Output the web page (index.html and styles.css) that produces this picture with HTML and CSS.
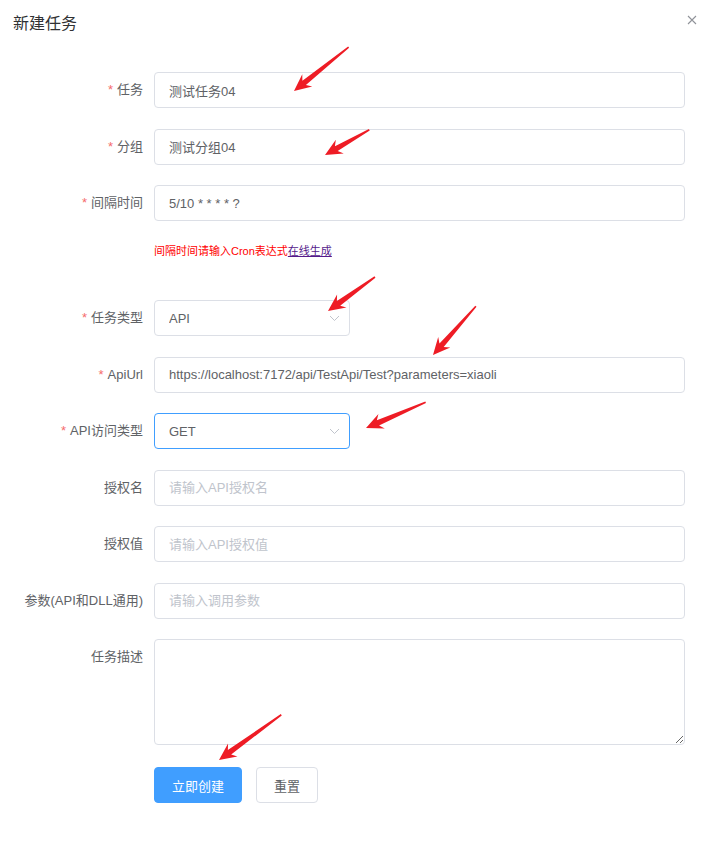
FILE: index.html
```html
<!DOCTYPE html>
<html lang="zh-CN">
<head>
    <meta charset="UTF-8">
    <meta name="viewport" content="width=device-width, initial-scale=1.0">
    <title>新建任务</title>
    <link rel="stylesheet" href="styles.css">
</head>
<body>
    <div class="dialog">
        <div class="dialog-header">
            <span class="dialog-title">新建任务</span>
            <button class="dialog-close" type="button" aria-label="关闭">
                <svg width="10" height="10" viewBox="0 0 10 10"><path d="M1 1L9 9M9 1L1 9" stroke="#909399" stroke-width="1.1" fill="none"/></svg>
            </button>
        </div>

        <form class="task-form">
            <div class="form-item">
                <label class="form-label required">任务</label>
                <div class="form-content"><input class="input" type="text" value="测试任务04"></div>
            </div>
            <div class="form-item">
                <label class="form-label required">分组</label>
                <div class="form-content"><input class="input" type="text" value="测试分组04"></div>
            </div>
            <div class="form-item">
                <label class="form-label required">间隔时间</label>
                <div class="form-content"><input class="input" type="text" value="5/10 * * * * ?"></div>
            </div>
            <div class="form-item hint-item">
                <label class="form-label"></label>
                <div class="form-content hint">间隔时间请输入Cron表达式<a href="#" class="hint-link">在线生成</a></div>
            </div>
            <div class="form-item">
                <label class="form-label required">任务类型</label>
                <div class="form-content">
                    <div class="select">
                        <input class="input" type="text" value="API" readonly>
                        <svg class="select-arrow" width="11" height="7" viewBox="0 0 11 7"><path d="M1 1L5.5 5.5L10 1" stroke="#C0C4CC" stroke-width="1" fill="none"/></svg>
                    </div>
                </div>
            </div>
            <div class="form-item">
                <label class="form-label required">ApiUrl</label>
                <div class="form-content"><input class="input" type="text" value="https://localhost:7172/api/TestApi/Test?parameters=xiaoli"></div>
            </div>
            <div class="form-item">
                <label class="form-label required">API访问类型</label>
                <div class="form-content">
                    <div class="select">
                        <input class="input focused" type="text" value="GET" readonly>
                        <svg class="select-arrow" width="11" height="7" viewBox="0 0 11 7"><path d="M1 1L5.5 5.5L10 1" stroke="#C0C4CC" stroke-width="1" fill="none"/></svg>
                    </div>
                </div>
            </div>
            <div class="form-item">
                <label class="form-label">授权名</label>
                <div class="form-content"><input class="input" type="text" placeholder="请输入API授权名"></div>
            </div>
            <div class="form-item">
                <label class="form-label">授权值</label>
                <div class="form-content"><input class="input" type="text" placeholder="请输入API授权值"></div>
            </div>
            <div class="form-item">
                <label class="form-label">参数(API和DLL通用)</label>
                <div class="form-content"><input class="input" type="text" placeholder="请输入调用参数"></div>
            </div>
            <div class="form-item top">
                <label class="form-label">任务描述</label>
                <div class="form-content"><textarea class="textarea"></textarea></div>
            </div>
            <div class="form-item">
                <label class="form-label"></label>
                <div class="form-content buttons">
                    <button class="btn btn-primary" type="button">立即创建</button>
                    <button class="btn" type="button">重置</button>
                </div>
            </div>
        </form>
    </div>

    <!-- red annotation arrows drawn over the screenshot (tip at origin, pointing along +x) -->
    <svg class="arrows" width="714" height="842" viewBox="0 0 714 842">
        <g transform="translate(294 91) rotate(141.3)"><polygon points="0,0 -17,-8 -13,-2.8 -70,-0.8 -70,0.8 -13,2.8 -17,8" fill="#EE1C25"/></g>
        <g transform="translate(325 155) rotate(150.4)"><polygon points="0,0 -17,-8 -13,-2.8 -51,-0.8 -51,0.8 -13,2.8 -17,8" fill="#EE1C25"/></g>
        <g transform="translate(328 311) rotate(144.1)"><polygon points="0,0 -17,-8 -13,-2.8 -58,-0.8 -58,0.8 -13,2.8 -17,8" fill="#EE1C25"/></g>
        <g transform="translate(433 355) rotate(131.3)"><polygon points="0,0 -17,-8 -13,-2.8 -65,-0.8 -65,0.8 -13,2.8 -17,8" fill="#EE1C25"/></g>
        <g transform="translate(366 428) rotate(156.6)"><polygon points="0,0 -17,-8 -13,-2.8 -65,-0.8 -65,0.8 -13,2.8 -17,8" fill="#EE1C25"/></g>
        <g transform="translate(219 760) rotate(144)"><polygon points="0,0 -17,-8 -13,-2.8 -77,-0.8 -77,0.8 -13,2.8 -17,8" fill="#EE1C25"/></g>
    </svg>
</body>
</html>
```

FILE: styles.css
```css
* {
    box-sizing: border-box;
}
body {
    margin: 0;
    background: #fff;
    font-family: 'Liberation Sans', 'Noto Sans CJK SC', sans-serif;
    color: #606266;
    position: relative;
    width: 714px;
    height: 842px;
    overflow: hidden;
}
.dialog-header {
    display: flex;
    justify-content: space-between;
    align-items: center;
    padding: 14px 16px 0 13px;
    height: 34px;
}
.dialog-title {
    font-size: 16px;
    line-height: 20px;
    color: #303133;
}
.dialog-close {
    border: none;
    background: none;
    padding: 0;
    width: 12px;
    height: 12px;
    display: flex;
    align-items: center;
    justify-content: center;
    cursor: pointer;
    margin-top: -8px;
}
.task-form {
    padding-top: 38px;
}
.form-item {
    display: flex;
    align-items: center;
    margin-bottom: 20.5px;
}
.form-item.top {
    align-items: flex-start;
    margin-bottom: 22px;
}
.form-label {
    width: 154px;
    flex: none;
    padding-right: 11px;
    text-align: right;
    font-size: 13px;
    line-height: 36px;
    color: #606266;
    white-space: nowrap;
}
.form-label.required::before {
    content: '*';
    color: #F56C6C;
    margin-right: 4px;
}
.form-content {
    flex: 1;
    margin-right: 29px;
}
.input {
    display: block;
    width: 100%;
    height: 36px;
    border: 1px solid #DCDFE6;
    border-radius: 4px;
    padding: 0 14px;
    font-family: inherit;
    font-size: 13px;
    color: #606266;
    background: #fff;
    outline: none;
}
.input::placeholder {
    color: #C0C4CC;
}
.input.focused {
    border-color: #409EFF;
}
.select {
    position: relative;
    width: 196px;
}
.select .input {
    cursor: pointer;
}
.select-arrow {
    position: absolute;
    right: 10px;
    top: 15px;
}
.hint-item {
    margin-bottom: 40.5px;
}
.hint-item .form-label {
    line-height: 18px;
}
.hint {
    font-size: 11px;
    line-height: 18px;
    color: #ff0000;
}
.hint-link {
    color: #551A8B;
    text-decoration: underline;
}
.textarea {
    display: block;
    width: 100%;
    height: 106px;
    border: 1px solid #DCDFE6;
    border-radius: 4px;
    padding: 5px 14px;
    font-family: inherit;
    font-size: 13px;
    color: #606266;
    resize: vertical;
    outline: none;
}
.buttons {
    display: flex;
    gap: 14px;
}
.btn {
    height: 36px;
    padding: 0 17px;
    border: 1px solid #DCDFE6;
    border-radius: 4px;
    background: #fff;
    color: #606266;
    font-family: inherit;
    font-size: 13px;
    cursor: pointer;
}
.btn-primary {
    background: #409EFF;
    border-color: #409EFF;
    color: #fff;
}
.arrows {
    position: absolute;
    left: 0;
    top: 0;
    pointer-events: none;
}
```
